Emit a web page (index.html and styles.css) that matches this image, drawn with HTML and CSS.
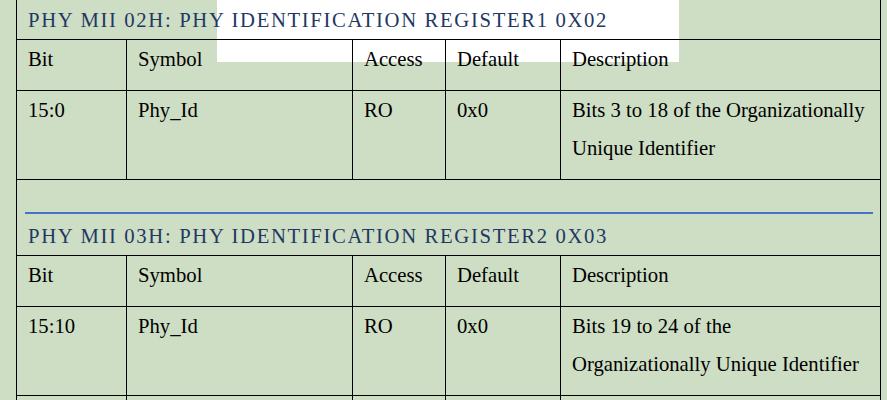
FILE: index.html
```html
<!DOCTYPE html>
<html lang="en">
<head>
<meta charset="utf-8">
<title>PHY registers</title>
<link rel="stylesheet" href="styles.css">
</head>
<body>
<div class="page">
  <div class="highlight"></div>
  <table class="reg">
    <colgroup>
      <col class="c-bit">
      <col class="c-sym">
      <col class="c-acc">
      <col class="c-def">
      <col class="c-desc">
    </colgroup>
    <tbody>
      <tr>
        <td class="title" colspan="5">PHY MII 02H: PHY IDENTIFICATION REGISTER1 0X02</td>
      </tr>
      <tr>
        <td>Bit</td><td>Symbol</td><td>Access</td><td>Default</td><td>Description</td>
      </tr>
      <tr>
        <td>15:0</td><td>Phy_Id</td><td>RO</td><td>0x0</td><td>Bits 3 to 18 of the Organizationally Unique Identifier</td>
      </tr>
      <tr>
        <td class="spacer" colspan="5"><div class="rule"></div></td>
      </tr>
      <tr>
        <td class="title" colspan="5">PHY MII 03H: PHY IDENTIFICATION REGISTER2 0X03</td>
      </tr>
      <tr>
        <td>Bit</td><td>Symbol</td><td>Access</td><td>Default</td><td>Description</td>
      </tr>
      <tr>
        <td>15:10</td><td>Phy_Id</td><td>RO</td><td>0x0</td><td>Bits 19 to 24 of the<br>Organizationally Unique Identifier</td>
      </tr>
      <tr>
        <td>&nbsp;</td><td>&nbsp;</td><td>&nbsp;</td><td>&nbsp;</td><td>&nbsp;</td>
      </tr>
    </tbody>
  </table>
</div>
</body>
</html>
```

FILE: styles.css
```css
html, body {
  margin: 0;
  padding: 0;
  background: #cedec4;
}

.page {
  position: relative;
  padding-left: 16px;
  font-family: "Liberation Serif", "Times New Roman", serif;
  font-size: 20.7px;
  color: #000;
}

.highlight {
  position: absolute;
  left: 217px;
  top: 0;
  width: 462px;
  height: 62px;
  background: #ffffff;
  z-index: 0;
}

.reg {
  position: relative;
  z-index: 1;
  border-collapse: collapse;
  table-layout: fixed;
  width: 864px;
}

.c-bit { width: 110px; }
.c-sym { width: 226px; }
.c-acc { width: 93px; }
.c-def { width: 115px; }
.c-desc { width: 320px; }

.reg td {
  border: 1px solid #000;
  padding: 0 4px 12px 11px;
  line-height: 38px;
  vertical-align: top;
  text-align: left;
}

.reg td.title {
  border-top: none;
  padding: 3px 11px 2px 11px;
  line-height: 34px;
  color: #1f3864;
  letter-spacing: 1.65px;
  white-space: nowrap;
}

.reg td.spacer {
  border-bottom: none;
  padding: 32px 7px 2px 8px;
  line-height: 0;
}

.rule {
  height: 2px;
  background: #4472c4;
}
```
